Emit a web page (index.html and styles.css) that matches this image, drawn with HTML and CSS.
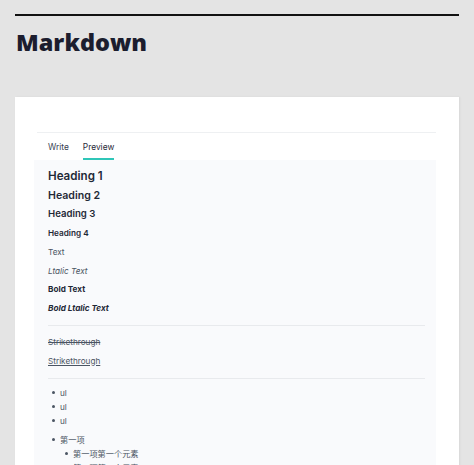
FILE: index.html
```html
<!DOCTYPE html>
<html lang="zh">
<head>
<meta charset="utf-8">
<title>Markdown</title>
<link rel="stylesheet" href="styles.css">
</head>
<body>
<div class="page">
  <header class="page-head">
    <h1 class="page-title">Markdown</h1>
  </header>
  <section class="card">
    <div class="editor">
      <nav class="tabs">
        <span class="tab">Write</span>
        <span class="tab active">Preview</span>
      </nav>
      <div class="preview">
        <h1 class="md-h1">Heading 1</h1>
        <h2 class="md-h2">Heading 2</h2>
        <h3 class="md-h3">Heading 3</h3>
        <h4 class="md-h4">Heading 4</h4>
        <p class="md-p">Text</p>
        <p class="md-p"><em>Ltalic Text</em></p>
        <p class="md-p"><strong>Bold Text</strong></p>
        <p class="md-p"><strong><em>Bold Ltalic Text</em></strong></p>
        <hr class="md-hr">
        <p class="md-p"><del>Strikethrough</del></p>
        <p class="md-p"><u>Strikethrough</u></p>
        <hr class="md-hr">
        <ul class="md-ul">
          <li>ul</li>
          <li>ul</li>
          <li>ul</li>
        </ul>
        <ul class="md-ul">
          <li>第一项
            <ul class="md-ul nested">
              <li>第一项第一个元素</li>
              <li>第一项第二个元素</li>
            </ul>
          </li>
        </ul>
      </div>
    </div>
  </section>
</div>
</body>
</html>
```
FILE: styles.css
```css
html, body {
  margin: 0;
  padding: 0;
}
body {
  background: #e4e4e4;
  font-family: Inter, "Noto Sans CJK SC", sans-serif;
  color: #1f2937;
  height: 465px;
  overflow: hidden;
}
.page {
  padding: 14px 15px 0 15px;
}
.page-head {
  border-top: 2px solid #111;
  padding-top: 10px;
  height: 71px;
}
.page-title {
  margin: 0;
  padding-left: 1px;
  font-family: "Open Sans", sans-serif;
  font-weight: 800;
  font-size: 23.5px;
  line-height: 32px;
  color: #1c1d2e;
  letter-spacing: 0;
}
.card {
  background: #fff;
  padding: 35px 23px 0 22px;
  box-shadow: 1px 0 2px rgba(0,0,0,0.06);
  min-height: 400px;
}
.editor {
  border-top: 1px solid #eef0f2;
}
.tabs {
  display: flex;
  gap: 14px;
  padding: 0 0 0 11px;
  height: 27px;
  align-items: flex-start;
}
.tab {
  font-size: 8.4px;
  line-height: 9px;
  padding-top: 10px;
  color: #374151;
  height: 15px;
}
.tab.active {
  border-bottom: 2px solid #2fc6b8;
  color: #1f2937;
}
.preview {
  background: #f9fafc;
  margin-left: -3px;
  padding: 6px 11px 0 14px;
  min-height: 400px;
}
.md-h1, .md-h2, .md-h3, .md-h4 {
  margin: 0;
  font-weight: 600;
  color: #1f2937;
}
.md-h1 { font-size: 11.6px; line-height: 20px; }
.md-h2 { font-size: 10.6px; line-height: 19px; }
.md-h3 { font-size: 9.6px; line-height: 18px; }
.md-h4 { font-size: 8.2px; line-height: 20px; }
.md-p {
  margin: 0;
  font-size: 8.2px;
  line-height: 18.5px;
  color: #4b5563;
}
.md-p strong { color: #1f2937; }
.md-hr {
  border: 0;
  border-top: 1px solid #e8eaed;
  margin: 8px 0 7px 0;
}
.md-ul {
  margin: 0;
  padding-left: 4px;
  font-size: 8.2px;
  line-height: 14px;
  color: #4b5563;
  list-style: none;
}
.md-ul li { color: #4b5563; }
.md-ul li::before {
  content: "";
  display: inline-block;
  width: 3px;
  height: 3px;
  border-radius: 50%;
  background: #4b5563;
  margin-right: 5px;
  vertical-align: middle;
  position: relative;
  top: -1px;
}
.md-ul + .md-ul { margin-top: 5px; }
.md-ul.nested { padding-left: 13px; margin-top: 0; }
.md-ul.nested li::before { margin-right: 5px; }
```
